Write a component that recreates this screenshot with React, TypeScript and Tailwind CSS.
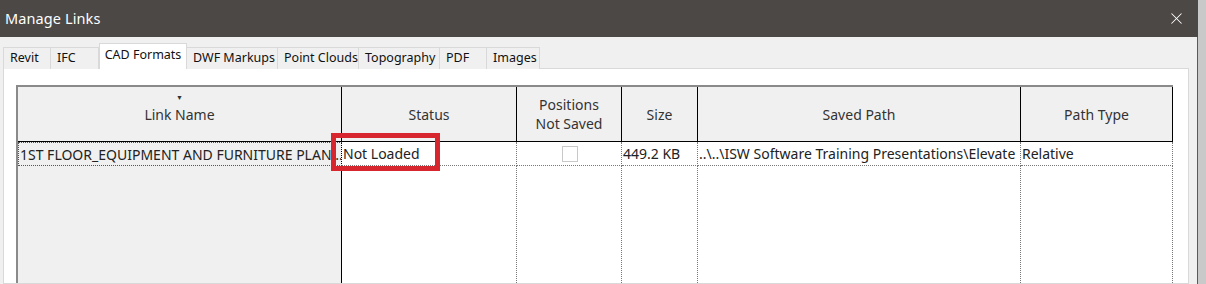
import { X } from 'lucide-react';

const tabs = ['Revit', 'IFC', 'CAD Formats', 'DWF Markups', 'Point Clouds', 'Topography', 'PDF', 'Images'];
const tabWidths = [48, 48, 88, 91, 81, 81, 47, 53];

const columns = [
    { title: 'Link Name', width: 324 },
    { title: 'Status', width: 175 },
    { title: 'Positions Not Saved', width: 105 },
    { title: 'Size', width: 76 },
    { title: 'Saved Path', width: 323 },
    { title: 'Path Type', width: 152 },
];

const font = { fontFamily: '"Noto Sans", "Open Sans", sans-serif' };

export default function App() {
    return (
        <div className="w-[1206px] h-[284px] overflow-hidden flex bg-[#c9c9c9] relative" style={font}>
            <div className="w-[1198px] h-full flex flex-col">
                <div className="h-[37px] shrink-0 bg-[#4b4846] flex items-center justify-between pl-[5px] pr-[12px]">
                    <span className="text-white text-[14.5px] tracking-[0.1px]">Manage Links</span>
                    <X size={19} strokeWidth={1.3} className="text-white" />
                </div>
                <div className="flex-1 bg-[#f0f0f0] flex flex-col pl-[3px] pr-[8px] pt-[6px] border-r border-[#5a5a5a]">
                    <div className="h-[26px] flex items-end relative z-10">
                        {tabs.map((t, i) => (
                            <div
                                key={t}
                                style={{ width: tabWidths[i] }}
                                className={
                                    i === 2
                                        ? 'h-[26px] shrink-0 bg-white border border-b-0 border-[#d9d9d9] flex items-center justify-center text-[12.5px] text-[#111] pb-[3px]'
                                        : 'h-[22px] shrink-0 bg-[#f0f0f0] border border-b-0 border-l-0 first:border-l border-[#d9d9d9] flex items-center pl-[6px] text-[12.5px] text-[#111]'
                                }
                            >
                                {t}
                            </div>
                        ))}
                    </div>
                    <div className="flex-1 bg-white border border-[#d9d9d9] -mt-px pl-[12px] pt-[16px]">
                        <div className="h-full flex border-t-2 border-l-2 border-[#8a8a8a] w-[1157px]">
                            {columns.map((c, i) => (
                                <div key={c.title} style={{ width: c.width }} className="flex flex-col shrink-0">
                                    <div className="h-[55px] bg-[#f0f0f0] border-r border-b border-black flex items-center justify-center text-center text-[14px] leading-[19px] text-[#333] relative">
                                        {i === 0 && (
                                            <span className="absolute top-[1px] left-1/2 -translate-x-1/2 text-[7px] text-[#333]">▼</span>
                                        )}
                                        {i === 2 ? (
                                            <span>
                                                Positions
                                                <br />
                                                Not Saved
                                            </span>
                                        ) : (
                                            c.title
                                        )}
                                    </div>
                                    <div
                                        className={
                                            i === 0
                                                ? 'h-[24px] bg-[#f0f0f0] border border-dotted border-[#555] border-r-black border-r-solid flex items-center pl-[1px] text-[14px] text-[#222] whitespace-nowrap overflow-hidden'
                                                : 'h-[24px] border-r border-b border-dotted border-[#777] flex items-center pl-[1px] text-[14px] text-[#222] whitespace-nowrap overflow-hidden'
                                        }
                                    >
                                        {i === 0 && '1ST FLOOR_EQUIPMENT AND FURNITURE PLAN...'}
                                        {i === 1 && 'Not Loaded'}
                                        {i === 2 && (
                                            <div className="w-full flex justify-center">
                                                <div className="w-[16px] h-[16px] border border-[#c9c9c9] bg-white" />
                                            </div>
                                        )}
                                        {i === 3 && '449.2 KB'}
                                        {i === 4 && '..\\..\\ISW Software Training Presentations\\Elevate'}
                                        {i === 5 && 'Relative'}
                                    </div>
                                    <div
                                        className={
                                            i === 0
                                                ? 'flex-1 bg-[#f0f0f0] border-r border-black'
                                                : 'flex-1 border-r border-dotted border-[#777]'
                                        }
                                    />
                                </div>
                            ))}
                        </div>
                    </div>
                </div>
            </div>
            <div className="absolute left-[331px] top-[133px] w-[109px] h-[38px] border-[5px] border-[#d7262d]" />
        </div>
    );
}
